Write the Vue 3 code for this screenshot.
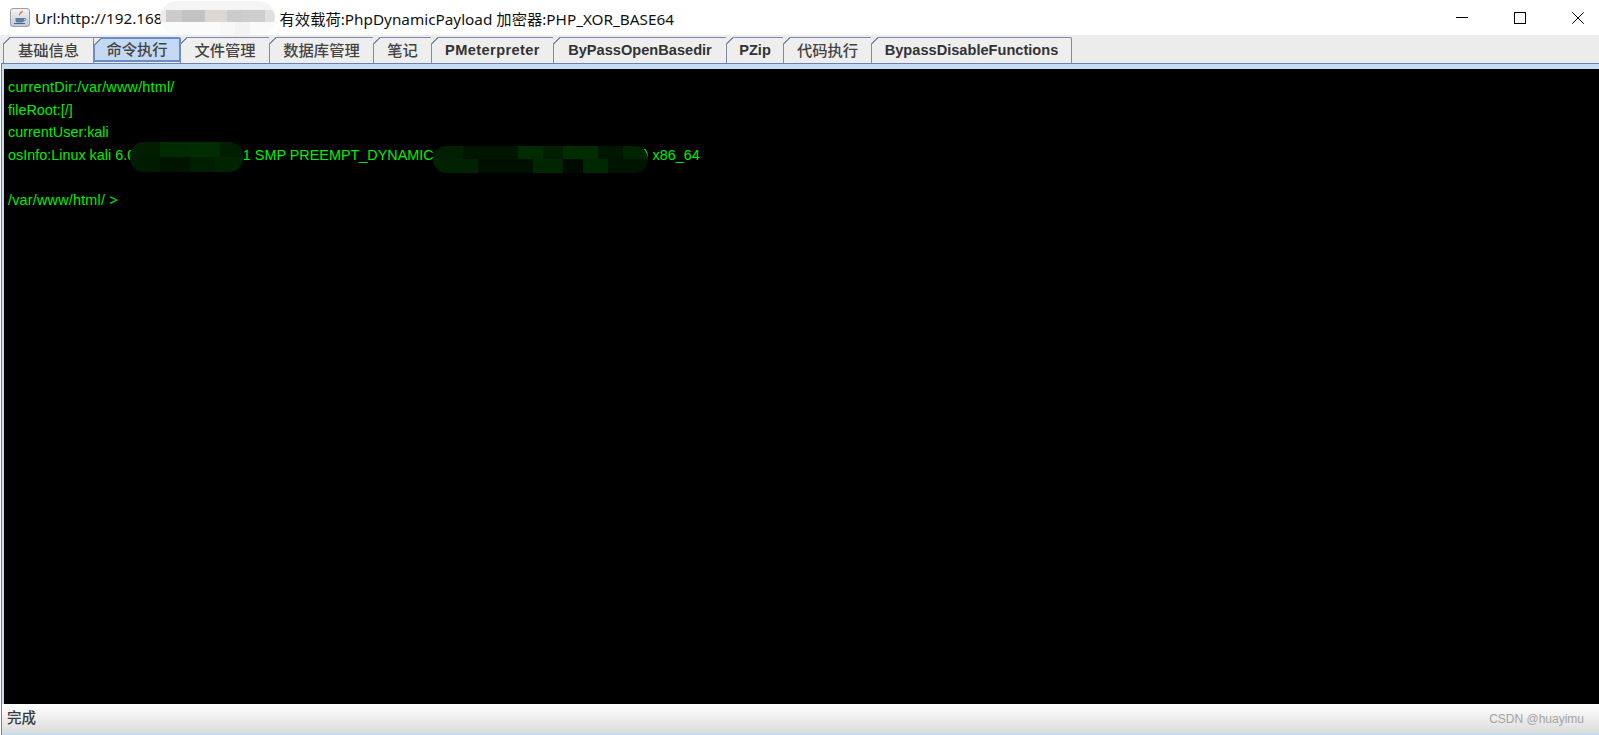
<script setup>
const tabs = [
  { label: '基础信息', cjk: true, width: 91 },
  { label: '命令执行', cjk: true, active: true, width: 88 },
  { label: '文件管理', cjk: true, width: 90 },
  { label: '数据库管理', cjk: true, width: 105 },
  { label: '笔记', cjk: true, width: 59 },
  { label: 'PMeterpreter', width: 123, wide: true },
  { label: 'ByPassOpenBasedir', width: 174 },
  { label: 'PZip', width: 58 },
  { label: '代码执行', cjk: true, width: 89 },
  { label: 'BypassDisableFunctions', width: 201 }
]
</script>

<template>
  <div class="window">
    <header class="titlebar">
      <svg class="app-icon" width="20" height="19" viewBox="0 0 20 19">
        <defs>
          <linearGradient id="iconBg" x1="0" y1="0" x2="0" y2="1">
            <stop offset="0" stop-color="#f4f5f8" />
            <stop offset="1" stop-color="#c3c9d3" />
          </linearGradient>
        </defs>
        <rect x="0.5" y="0.5" width="19" height="18" rx="2.5" fill="url(#iconBg)" stroke="#9a9ea6" />
        <path d="M10.5 2.5c1.5 1.6-2.5 2.7-1.2 5 .3.5.7.9 1 1.2-1.6-1.6.2-2.8 1.6-3.8 1-.8 1.1-1.6.4-2.4-.1 1-1 1.2-1.8 0z" fill="#e0762a" />
        <path d="M5.5 10h8.5v2.4c0 1.2-1 2-2.2 2H7.700c-1.200 0-2.200-.8-2.200-2z" fill="#5d7e9e" />
        <path d="M14 10.500h1.300c1 0 1 2-.4 2H14" fill="none" stroke="#5d7e9e" stroke-width="0.9" />
        <path d="M4 15.500h11" stroke="#47678a" stroke-width="1.100" />
      </svg>
      <div class="title-text">
        <span>Url:http://192.168</span>
        <span class="title-gap"><span class="blur-title"><i class="blur-row-top"></i><i class="blur-row-a"></i><i class="blur-row-b"></i></span></span>
        <span>有效载荷:PhpDynamicPayload 加密器:PHP_XOR_BASE64</span>
      </div>
      <div class="controls">
        <svg width="12" height="12" viewBox="0 0 12 12"><path d="M0 5.500h12" stroke="#000" stroke-width="1" /></svg>
        <svg width="12" height="12" viewBox="0 0 12 12"><rect x="0.500" y="0.500" width="11" height="11" fill="none" stroke="#000" stroke-width="1" /></svg>
        <svg width="12" height="12" viewBox="0 0 12 12"><path d="M0.300 0.300l11.400 11.400M11.700 0.300L0.300 11.700" stroke="#000" stroke-width="1" /></svg>
      </div>
    </header>

    <nav class="tabstrip">
      <div
        v-for="tab in tabs"
        :key="tab.label"
        class="tab"
        :class="{ active: tab.active, cjk: tab.cjk, wide: tab.wide }"
        :style="{ width: tab.width + 'px' }"
      >{{ tab.label }}</div>
    </nav>

    <main class="panel">
      <section class="terminal">
        <div class="line path">currentDir:/var/www/html/</div>
        <div class="line">fileRoot:[/]</div>
        <div class="line">currentUser:kali</div>
        <div class="line">
          <span>osInfo:Linux kali 6.0</span><span class="gap gap-one"><span class="blur-green blur-one"></span></span><span>1 SMP PREEMPT_DYNAMIC</span><span class="gap gap-two"><span class="blur-green blur-two"></span></span><span>) x86_64</span>
        </div>
        <div class="line blank">&nbsp;</div>
        <div class="line path">/var/www/html/ &gt;</div>
      </section>
      <footer class="status">
        <span class="status-text">完成</span>
        <span class="watermark">CSDN @huayimu</span>
      </footer>
    </main>
  </div>
</template>

<style scoped>
.window {
  display: flex;
  flex-direction: column;
  height: 735px;
  background: #fff;
  overflow: hidden;
}

.titlebar {
  display: flex;
  align-items: center;
  height: 35px;
  flex: none;
  padding-left: 10px;
  background: #fff;
}

.app-icon {
  flex: none;
  margin-right: 5px;
}

.title-text {
  display: flex;
  align-items: center;
  font-family: "Noto Sans", "Noto Sans CJK SC", sans-serif;
  font-size: 15.300px;
  color: #111;
  white-space: nowrap;
}

.title-gap {
  position: relative;
  display: inline-block;
  width: 117px;
  height: 20px;
}

.blur-title {
  position: absolute;
  left: -3px;
  top: -7px;
  width: 115px;
  height: 34px;
  border-radius: 17px;
  overflow: hidden;
  display: flex;
  flex-direction: column;
}

.blur-title i {
  display: block;
}

.blur-row-top {
  height: 9px;
  background: #f4f4f4;
}

.blur-row-a {
  height: 12px;
  background: linear-gradient(90deg,
    #ececec 0 6px,
    #cccbca 6px 22px,
    #c3c3c3 22px 45px,
    #dad7d4 45px 67px,
    #c9cccf 67px 81px,
    #cdcfce 81px 105px,
    #e0e0e0 105px);
}

.blur-row-b {
  flex: 1;
  background: linear-gradient(90deg,
    #fbfbfb 0 60px,
    #f8f8f8 60px 75px,
    #f3f3f3 75px 90px,
    #fafafa 90px);
}

.controls {
  margin-left: auto;
  display: flex;
  gap: 46px;
  padding-right: 15px;
}

.tabstrip {
  display: flex;
  align-items: flex-end;
  height: 28px;
  flex: none;
  padding-left: 3px;
  background: #ececec;
}

.tab {
  position: relative;
  box-sizing: border-box;
  display: flex;
  align-items: center;
  justify-content: center;
  height: 26px;
  padding-bottom: 1px;
  border: 1px solid #7d8aa8;
  border-bottom: none;
  border-radius: 0 2px 0 0;
  background: #eeeeee;
  font-family: "Liberation Sans", "Noto Sans CJK SC", sans-serif;
  font-size: 14.600px;
  font-weight: 700;
  color: #333;
  white-space: nowrap;
}

.tab + .tab {
  margin-left: -1px;
}

.tab.wide {
  letter-spacing: 0.400px;
}

.tab::before {
  content: "";
  position: absolute;
  left: -1px;
  top: -1px;
  width: 7px;
  height: 7px;
  background: linear-gradient(135deg, #ececec 0 46%, #7d8aa8 46% 62%, transparent 62%);
}

.tab.cjk {
  font-family: "Noto Sans CJK SC", sans-serif;
  font-size: 15.300px;
  font-weight: 500;
  color: #444;
  padding-bottom: 3px;
}

.tab.active {
  z-index: 1;
  height: 25px;
  margin-bottom: 1px;
  border: 2px solid #6c8cc6;
  background: #c3d9f1;
}

.panel {
  flex: 1;
  display: flex;
  flex-direction: column;
  margin-left: 1px;
  padding: 5px 0 0 2px;
  border-top: 1px solid #6b82b3;
  border-left: 1px solid #6b82b3;
  background: #c6dcf3;
  min-height: 0;
}

.terminal {
  flex: 1;
  min-height: 0;
  padding: 7px 0 0 4px;
  background: #000;
  color: #00f000;
  font-family: "Liberation Sans", sans-serif;
  font-size: 14.400px;
  line-height: 22.500px;
}

.line {
  white-space: pre;
  height: 22.500px;
}

.path {
  letter-spacing: 0.200px;
}

.gap {
  position: relative;
  display: inline-block;
  height: 22px;
  vertical-align: top;
}

.gap-one {
  width: 107.600px;
}

.gap-two {
  width: 210px;
}

.blur-green {
  position: absolute;
  top: -2px;
  height: 30px;
  border-radius: 14px;
  display: block;
}

.blur-one {
  left: -5px;
  width: 113px;
  background:
    linear-gradient(90deg, #001f00 0 30px, #002a00 30px 60px, #002c00 60px 90px, #001d00 90px) top / 100% 15px no-repeat,
    linear-gradient(90deg, #001c00 0 30px, #001400 30px 60px, #001f00 60px 85px, #002400 85px) bottom / 100% 15px no-repeat;
}

.blur-two {
  left: -1px;
  top: 2px;
  width: 215px;
  height: 27px;
  background:
    linear-gradient(90deg, #001f00 0 30px, #001600 30px 85px, #002b00 85px 110px, #001e00 110px 130px, #002c00 130px 165px, #001600 165px 190px, #002400 190px) top / 100% 13px no-repeat,
    linear-gradient(90deg, #002200 0 45px, #001000 45px 100px, #002500 100px 130px, #000a00 130px 150px, #002800 150px 175px, #001400 175px) bottom / 100% 14px no-repeat;
}

.status {
  flex: none;
  display: flex;
  align-items: center;
  justify-content: space-between;
  height: 29px;
  margin: 0 0 2px -2px;
  padding: 0 15px 0 5px;
  background: linear-gradient(180deg, #ffffff, #dcdcdc);
}

.status-text {
  font-family: "Noto Sans CJK SC", sans-serif;
  font-size: 14.500px;
  line-height: 24px;
  font-weight: 500;
  color: #3b3b3b;
  padding-bottom: 3px;
}

.watermark {
  font-family: "Liberation Sans", sans-serif;
  font-size: 12px;
  color: #a3a3a3;
}
</style>

<style>
html, body {
  margin: 0;
  overflow: hidden;
  background: #fff;
}
</style>
